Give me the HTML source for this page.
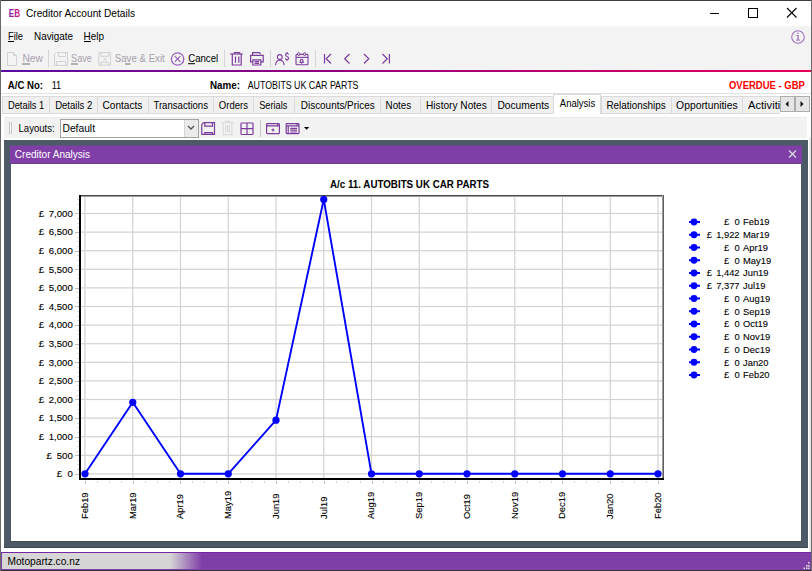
<!DOCTYPE html>
<html><head><meta charset="utf-8"><style>html,body{margin:0;padding:0;width:812px;height:571px;overflow:hidden;background:#fff}svg{display:block}</style></head>
<body><svg width="812" height="571" viewBox="0 0 812 571"><defs><linearGradient id="gl" x1="0" x2="1" y1="0" y2="0"><stop offset="0" stop-color="#5a0ca0"/><stop offset="0.5" stop-color="#a0007a"/><stop offset="1" stop-color="#e8005a"/></linearGradient><linearGradient id="eb" x1="0" x2="1"><stop offset="0" stop-color="#7a1fb0"/><stop offset="1" stop-color="#e0207a"/></linearGradient><linearGradient id="sb" x1="170" x2="202" y1="0" y2="0" gradientUnits="userSpaceOnUse"><stop offset="0" stop-color="#d6d6d6"/><stop offset="1" stop-color="#7f3fa7"/></linearGradient></defs><rect x="0" y="0" width="812" height="571" fill="#ffffff" /><rect x="1" y="26" width="810" height="44" fill="#f3f3f3" /><rect x="1" y="70" width="810" height="2" fill="url(#gl)" /><rect x="2" y="93" width="809" height="1" fill="#e1e1e1" /><rect x="4" y="117" width="803" height="21" fill="#f2f2f2" /><rect x="4" y="117" width="803" height="1" fill="#ebebeb" /><rect x="4" y="140" width="804" height="408" fill="#4b5a66" /><rect x="10" y="145" width="792" height="1" fill="#664c88" /><rect x="10" y="146" width="792" height="17" fill="#7f3fa7" /><rect x="10" y="163" width="792" height="1" fill="#6a3f8e" /><rect x="11" y="164" width="790" height="377" fill="#ffffff" /><rect x="10" y="541" width="792" height="1" fill="#434c54" /><rect x="4" y="547" width="804" height="1" fill="#3b4853" /><rect x="1" y="552" width="810" height="1" fill="#7526a6" /><rect x="1" y="553" width="810" height="16" fill="url(#sb)" /><rect x="1" y="569" width="810" height="1" fill="#7f3fa7" /><rect x="0" y="570" width="812" height="1" fill="#333333" /><rect x="1" y="552" width="1" height="18" fill="#7f3fa7" /><text x="7.4" y="564.6" font-size="11" font-weight="normal" fill="#000" text-anchor="start" font-family="Liberation Sans" textLength="72.6" lengthAdjust="spacingAndGlyphs" >Motopartz.co.nz</text><text x="8.8" y="16.6" font-size="10" font-weight="bold" fill="url(#eb)" text-anchor="start" font-family="Liberation Sans" textLength="11.4" lengthAdjust="spacingAndGlyphs" >EB</text><text x="26" y="17" font-size="11" font-weight="normal" fill="#000" text-anchor="start" font-family="Liberation Sans" textLength="109" lengthAdjust="spacingAndGlyphs" >Creditor Account Details</text><g stroke="#000" stroke-width="1" fill="none" shape-rendering="crispEdges"><line x1="710" y1="13.5" x2="719" y2="13.5"/><rect x="748.5" y="8.5" width="9" height="9"/></g><g stroke="#000" stroke-width="1.1" fill="none"><line x1="787" y1="8" x2="796.5" y2="17.5"/><line x1="796.5" y1="8" x2="787" y2="17.5"/></g><text x="8" y="40" font-size="11" font-weight="normal" fill="#000" text-anchor="start" font-family="Liberation Sans" textLength="15" lengthAdjust="spacingAndGlyphs" >File</text><text x="34" y="40" font-size="11" font-weight="normal" fill="#000" text-anchor="start" font-family="Liberation Sans" textLength="39" lengthAdjust="spacingAndGlyphs" >Navigate</text><text x="83.5" y="40" font-size="11" font-weight="normal" fill="#000" text-anchor="start" font-family="Liberation Sans" textLength="20.5" lengthAdjust="spacingAndGlyphs" >Help</text><rect x="8" y="41" width="6" height="1" fill="#000" /><rect x="84" y="41" width="7" height="1" fill="#000" /><circle cx="798" cy="37" r="6.3" fill="none" stroke="#a070c0" stroke-width="1.1"/><g fill="#a070c0"><rect x="797.4" y="35" width="1.3" height="5"/><rect x="796" y="39.6" width="4" height="1"/><rect x="796.5" y="35" width="1.5" height="0.9"/><circle cx="798" cy="33.2" r="0.8"/></g><path d="M7.5 52.5 H13.5 L16.5 55.5 V65.5 H7.5 Z M13.5 52.5 V55.5 H16.5" fill="none" stroke="#d2d2d2" stroke-width="1"/><text x="22.4" y="62.2" font-size="11" font-weight="normal" fill="#a8a0ae" text-anchor="start" font-family="Liberation Sans" textLength="20.4" lengthAdjust="spacingAndGlyphs" >New</text><rect x="22" y="63.5" width="8" height="1" fill="#707070" /><rect x="48" y="50" width="1" height="17" fill="#d5d5d5" /><path d="M56.5 52.5 H67.5 V65.5 H54.5 V54.5 Z" fill="none" stroke="#d2d2d2" stroke-width="1"/><path d="M58.5 52.5 V56.5 H65.5 V52.5 M56.5 65.5 V61.5 H65.5 V65.5" fill="none" stroke="#d2d2d2" stroke-width="1"/><text x="71.1" y="62.2" font-size="11" font-weight="normal" fill="#a8a0ae" text-anchor="start" font-family="Liberation Sans" textLength="20.7" lengthAdjust="spacingAndGlyphs" >Save</text><rect x="71" y="63.5" width="7" height="1" fill="#707070" /><path d="M98.8 52.6 H110.6 V65.2 H98.8 Z M100.8 52.6 V56.3 H108.8 V52.6 M100.8 65.2 V62.4 H108.8 V65.2 M103.3 57.6 L106.7 61 M106.7 57.6 L103.3 61" fill="none" stroke="#d2d2d2" stroke-width="1"/><text x="114.7" y="62.2" font-size="11" font-weight="normal" fill="#a8a0ae" text-anchor="start" font-family="Liberation Sans" textLength="50.1" lengthAdjust="spacingAndGlyphs" >Save &amp; Exit</text><rect x="125" y="63.5" width="5.5" height="1" fill="#707070" /><circle cx="177.6" cy="59" r="6.2" fill="none" stroke="#9a62bd" stroke-width="1.3"/><path d="M174.8 56.2 L180.4 61.8 M180.4 56.2 L174.8 61.8" stroke="#9a62bd" stroke-width="1.2"/><text x="188.2" y="62.2" font-size="11" font-weight="normal" fill="#000" text-anchor="start" font-family="Liberation Sans" textLength="30" lengthAdjust="spacingAndGlyphs" >Cancel</text><rect x="188" y="63.2" width="7" height="1" fill="#000" /><rect x="224" y="50" width="1" height="17" fill="#d5d5d5" /><g fill="none" stroke="#7b3c9e" stroke-width="1.2"><path d="M230.2 54 H242.8"/><path d="M234.5 53.8 V52.6 H239.6 V53.8"/><path d="M232.3 54 V65 H241.2 V54"/><path d="M235.5 56.5 V62.8 M238.8 56.5 V62.8"/></g><g fill="none" stroke="#7b3c9e" stroke-width="1.2"><path d="M252.6 55 V52.6 H259.4 L260.6 54"/><path d="M252.4 61.8 H250.6 V55.4 H263.2 V61.8 H261"/><path d="M252.8 59.8 H260.8 V65 H252.8 Z"/><path d="M254.6 61.6 H259 M254.6 63.4 H259"/></g><rect x="270" y="50" width="1" height="17" fill="#d5d5d5" /><g fill="none" stroke="#7b3c9e" stroke-width="1.1"><circle cx="279.8" cy="57" r="2.4"/><path d="M275.6 65.2 Q275.9 60.3 279.8 60 Q283.8 60.3 284.1 65.2"/><path d="M288.5 54.5 Q288.2 53.3 287 53.3 Q285.6 53.3 285.6 54.8 Q285.6 56 287 56.4 Q288.6 56.9 288.6 58.2 Q288.6 59.6 287 59.6 Q285.6 59.6 285.4 58.4"/><path d="M287 52.1 V53.3 M287 59.6 V60.8"/></g><g fill="none" stroke="#7b3c9e" stroke-width="1.1"><rect x="296" y="54.4" width="12" height="10.3" rx="1"/><path d="M296 57.4 H308"/></g><g fill="#f3f3f3" stroke="#7b3c9e" stroke-width="1"><rect x="297.8" y="52.6" width="1.8" height="3" rx="0.9"/><rect x="303.7" y="52.6" width="1.8" height="3" rx="0.9"/></g><g fill="none" stroke="#7b3c9e" stroke-width="1.1"><path d="M299.6 62.4 H303.8 M300.3 62.3 Q300.2 59.3 301.7 59.3 Q303.2 59.3 303.1 62.3 M301.7 62.6 V63.8"/></g><rect x="315" y="50" width="1" height="17" fill="#d5d5d5" /><g fill="none" stroke="#7b3c9e" stroke-width="1.2"><path d="M324.5 54 V63.5 M331 54 L326.2 58.8 L331 63.5"/><path d="M349.5 54 L344.7 58.8 L349.5 63.5"/><path d="M364 54 L368.8 58.8 L364 63.5"/><path d="M382.5 54 L387.3 58.8 L382.5 63.5 M389.4 54 V63.5"/></g><text x="7.8" y="89" font-size="11" font-weight="bold" fill="#000" text-anchor="start" font-family="Liberation Sans" textLength="35.2" lengthAdjust="spacingAndGlyphs" >A/C No:</text><text x="51.7" y="89" font-size="11" font-weight="normal" fill="#000" text-anchor="start" font-family="Liberation Sans" textLength="9.5" lengthAdjust="spacingAndGlyphs" >11</text><text x="210" y="89" font-size="11" font-weight="bold" fill="#000" text-anchor="start" font-family="Liberation Sans" textLength="30" lengthAdjust="spacingAndGlyphs" >Name:</text><text x="247.7" y="89" font-size="11" font-weight="normal" fill="#000" text-anchor="start" font-family="Liberation Sans" textLength="110.8" lengthAdjust="spacingAndGlyphs" >AUTOBITS UK CAR PARTS</text><text x="729" y="89" font-size="11" font-weight="bold" fill="#ff0000" text-anchor="start" font-family="Liberation Sans" textLength="75.8" lengthAdjust="spacingAndGlyphs" >OVERDUE - GBP</text><rect x="2" y="96" width="778" height="18" fill="#dadada" /><rect x="3" y="97" width="46" height="16" fill="#f0f0f0" /><rect x="50" y="97" width="47" height="16" fill="#f0f0f0" /><rect x="98" y="97" width="50" height="16" fill="#f0f0f0" /><rect x="149" y="97" width="64" height="16" fill="#f0f0f0" /><rect x="214" y="97" width="39" height="16" fill="#f0f0f0" /><rect x="254" y="97" width="40" height="16" fill="#f0f0f0" /><rect x="295" y="97" width="85" height="16" fill="#f0f0f0" /><rect x="381" y="97" width="39" height="16" fill="#f0f0f0" /><rect x="421" y="97" width="70" height="16" fill="#f0f0f0" /><rect x="492" y="97" width="61" height="16" fill="#f0f0f0" /><rect x="554" y="97" width="47" height="16" fill="#f0f0f0" /><rect x="602" y="97" width="69" height="16" fill="#f0f0f0" /><rect x="672" y="97" width="70" height="16" fill="#f0f0f0" /><rect x="743" y="97" width="38" height="16" fill="#f0f0f0" /><rect x="553" y="94" width="48" height="20" fill="#dadada" /><rect x="554" y="95" width="46" height="20" fill="#ffffff" /><clipPath id="tc"><rect x="0" y="90" width="780" height="30"/></clipPath><g clip-path="url(#tc)"><text x="7.9" y="108.8" font-size="11" font-weight="normal" fill="#000" text-anchor="start" font-family="Liberation Sans" textLength="36.4" lengthAdjust="spacingAndGlyphs" >Details 1</text><text x="55.2" y="108.8" font-size="11" font-weight="normal" fill="#000" text-anchor="start" font-family="Liberation Sans" textLength="37" lengthAdjust="spacingAndGlyphs" >Details 2</text><text x="102.5" y="108.8" font-size="11" font-weight="normal" fill="#000" text-anchor="start" font-family="Liberation Sans" textLength="39.8" lengthAdjust="spacingAndGlyphs" >Contacts</text><text x="153.4" y="108.8" font-size="11" font-weight="normal" fill="#000" text-anchor="start" font-family="Liberation Sans" textLength="54.6" lengthAdjust="spacingAndGlyphs" >Transactions</text><text x="218.8" y="108.8" font-size="11" font-weight="normal" fill="#000" text-anchor="start" font-family="Liberation Sans" textLength="29.2" lengthAdjust="spacingAndGlyphs" >Orders</text><text x="259.2" y="108.8" font-size="11" font-weight="normal" fill="#000" text-anchor="start" font-family="Liberation Sans" textLength="28.2" lengthAdjust="spacingAndGlyphs" >Serials</text><text x="300.8" y="108.8" font-size="11" font-weight="normal" fill="#000" text-anchor="start" font-family="Liberation Sans" textLength="73.9" lengthAdjust="spacingAndGlyphs" >Discounts/Prices</text><text x="385.6" y="108.8" font-size="11" font-weight="normal" fill="#000" text-anchor="start" font-family="Liberation Sans" textLength="25.6" lengthAdjust="spacingAndGlyphs" >Notes</text><text x="426" y="108.8" font-size="11" font-weight="normal" fill="#000" text-anchor="start" font-family="Liberation Sans" textLength="60.8" lengthAdjust="spacingAndGlyphs" >History Notes</text><text x="497.4" y="108.8" font-size="11" font-weight="normal" fill="#000" text-anchor="start" font-family="Liberation Sans" textLength="51.8" lengthAdjust="spacingAndGlyphs" >Documents</text><text x="559.8" y="106.6" font-size="11" font-weight="normal" fill="#000" text-anchor="start" font-family="Liberation Sans" textLength="35.4" lengthAdjust="spacingAndGlyphs" >Analysis</text><text x="606.4" y="108.8" font-size="11" font-weight="normal" fill="#000" text-anchor="start" font-family="Liberation Sans" textLength="59.3" lengthAdjust="spacingAndGlyphs" >Relationships</text><text x="676.1" y="108.8" font-size="11" font-weight="normal" fill="#000" text-anchor="start" font-family="Liberation Sans" textLength="61.5" lengthAdjust="spacingAndGlyphs" >Opportunities</text><text x="748" y="108.8" font-size="11" font-weight="normal" fill="#000" text-anchor="start" font-family="Liberation Sans" textLength="44" lengthAdjust="spacingAndGlyphs" >Activities</text></g><rect x="780" y="96" width="15" height="16" fill="#adadad" /><rect x="781" y="97" width="13" height="14" fill="#e5e5e5" /><rect x="795" y="96" width="15" height="16" fill="#adadad" /><rect x="796" y="97" width="13" height="14" fill="#e5e5e5" /><path d="M785.5 104 L788.5 101 V107 Z" fill="#000"/><path d="M803.5 104 L800.5 101 V107 Z" fill="#000"/><rect x="9" y="122" width="1" height="12" fill="#c8c8c8" /><rect x="11" y="122" width="1" height="12" fill="#c8c8c8" /><text x="18.5" y="132" font-size="11" font-weight="normal" fill="#000" text-anchor="start" font-family="Liberation Sans" textLength="36.2" lengthAdjust="spacingAndGlyphs" >Layouts:</text><rect x="60" y="119" width="139" height="19" fill="#a2a2a2" /><rect x="61" y="120" width="137" height="17" fill="#ffffff" /><rect x="184" y="120" width="14" height="17" fill="#ebebeb" /><rect x="184" y="120" width="1" height="17" fill="#d4d4d4" /><path d="M188 126 L191 129 L194 126" fill="none" stroke="#505050" stroke-width="1.3"/><text x="62.5" y="132" font-size="11" font-weight="normal" fill="#000" text-anchor="start" font-family="Liberation Sans" textLength="32.5" lengthAdjust="spacingAndGlyphs" >Default</text><g fill="none" stroke="#7b3c9e" stroke-width="1.2"><path d="M203.6 122.6 H214.5 V134.4 H201.8 V124.4 Z"/><path d="M204.8 122.6 V126.2 H212.5 V122.6 M204.8 134.4 V132.6 H212.5 V134.4"/></g><g fill="none" stroke="#dcdcdc" stroke-width="1.2"><path d="M221.5 122.6 H233.6"/><path d="M225.5 122.3 V121.3 H229.6 V122.3"/><path d="M223.3 122.6 V134.6 H231.8 V122.6"/><path d="M225.8 125 V132.2 M227.6 125 V132.2 M229.4 125 V132.2"/></g><g fill="none" stroke="#7b3c9e" stroke-width="1.2"><rect x="241" y="123" width="12" height="11.5" rx="0.8"/><path d="M247 123 V134.5 M241 128.7 H253"/></g><rect x="260" y="120" width="1" height="17" fill="#c8c8c8" /><g fill="none" stroke="#7b3c9e" stroke-width="1.2"><rect x="266.6" y="123.6" width="12.8" height="10" rx="0.8"/><path d="M266.6 125.8 H279.4 M277.6 123.6 V125.8"/><path d="M273 128.5 V131.5 M271.5 130 H274.5"/><rect x="286.2" y="123.6" width="12.8" height="10" rx="0.8"/><path d="M286.2 125.8 H299 M297.2 123.6 V125.8 M288.2 125.8 V133.6 M290.3 128.3 H297 M290.3 130.2 H297 M290.3 132 H297"/></g><path d="M304 127 H309.2 L306.6 129.8 Z" fill="#000"/><text x="14.8" y="158.3" font-size="11" font-weight="normal" fill="#ffffff" text-anchor="start" font-family="Liberation Sans" textLength="75.3" lengthAdjust="spacingAndGlyphs" >Creditor Analysis</text><path d="M789 150.5 L796 157.5 M796 150.5 L789 157.5" stroke="#dcdcdc" stroke-width="1.3"/><text x="330" y="188" font-size="10" font-weight="bold" fill="#000" text-anchor="start" font-family="Liberation Sans" textLength="159" lengthAdjust="spacingAndGlyphs" >A/c 11. AUTOBITS UK CAR PARTS</text><rect x="81" y="473.30" width="581" height="1.2" fill="#d2d2d2"/><rect x="81" y="454.70" width="581" height="1.2" fill="#d2d2d2"/><rect x="81" y="436.10" width="581" height="1.2" fill="#d2d2d2"/><rect x="81" y="417.50" width="581" height="1.2" fill="#d2d2d2"/><rect x="81" y="398.90" width="581" height="1.2" fill="#d2d2d2"/><rect x="81" y="380.30" width="581" height="1.2" fill="#d2d2d2"/><rect x="81" y="361.70" width="581" height="1.2" fill="#d2d2d2"/><rect x="81" y="343.10" width="581" height="1.2" fill="#d2d2d2"/><rect x="81" y="324.50" width="581" height="1.2" fill="#d2d2d2"/><rect x="81" y="305.90" width="581" height="1.2" fill="#d2d2d2"/><rect x="81" y="287.30" width="581" height="1.2" fill="#d2d2d2"/><rect x="81" y="268.70" width="581" height="1.2" fill="#d2d2d2"/><rect x="81" y="250.10" width="581" height="1.2" fill="#d2d2d2"/><rect x="81" y="231.50" width="581" height="1.2" fill="#d2d2d2"/><rect x="81" y="212.90" width="581" height="1.2" fill="#d2d2d2"/><rect x="84.40" y="197" width="1.2" height="281" fill="#d2d2d2"/><rect x="132.15" y="197" width="1.2" height="281" fill="#d2d2d2"/><rect x="179.90" y="197" width="1.2" height="281" fill="#d2d2d2"/><rect x="227.65" y="197" width="1.2" height="281" fill="#d2d2d2"/><rect x="275.40" y="197" width="1.2" height="281" fill="#d2d2d2"/><rect x="323.15" y="197" width="1.2" height="281" fill="#d2d2d2"/><rect x="370.90" y="197" width="1.2" height="281" fill="#d2d2d2"/><rect x="418.65" y="197" width="1.2" height="281" fill="#d2d2d2"/><rect x="466.40" y="197" width="1.2" height="281" fill="#d2d2d2"/><rect x="514.15" y="197" width="1.2" height="281" fill="#d2d2d2"/><rect x="561.90" y="197" width="1.2" height="281" fill="#d2d2d2"/><rect x="609.65" y="197" width="1.2" height="281" fill="#d2d2d2"/><rect x="657.40" y="197" width="1.2" height="281" fill="#d2d2d2"/><g shape-rendering="crispEdges"><rect x="75" y="474" width="4" height="1" fill="#bdbdbd" /><rect x="77" y="469" width="2" height="1" fill="#dadada" /><rect x="77" y="464" width="2" height="1" fill="#dadada" /><rect x="77" y="460" width="2" height="1" fill="#dadada" /><rect x="75" y="455" width="4" height="1" fill="#bdbdbd" /><rect x="77" y="451" width="2" height="1" fill="#dadada" /><rect x="77" y="446" width="2" height="1" fill="#dadada" /><rect x="77" y="441" width="2" height="1" fill="#dadada" /><rect x="75" y="437" width="4" height="1" fill="#bdbdbd" /><rect x="77" y="432" width="2" height="1" fill="#dadada" /><rect x="77" y="427" width="2" height="1" fill="#dadada" /><rect x="77" y="423" width="2" height="1" fill="#dadada" /><rect x="75" y="418" width="4" height="1" fill="#bdbdbd" /><rect x="77" y="413" width="2" height="1" fill="#dadada" /><rect x="77" y="409" width="2" height="1" fill="#dadada" /><rect x="77" y="404" width="2" height="1" fill="#dadada" /><rect x="75" y="399" width="4" height="1" fill="#bdbdbd" /><rect x="77" y="395" width="2" height="1" fill="#dadada" /><rect x="77" y="390" width="2" height="1" fill="#dadada" /><rect x="77" y="385" width="2" height="1" fill="#dadada" /><rect x="75" y="381" width="4" height="1" fill="#bdbdbd" /><rect x="77" y="376" width="2" height="1" fill="#dadada" /><rect x="77" y="372" width="2" height="1" fill="#dadada" /><rect x="77" y="367" width="2" height="1" fill="#dadada" /><rect x="75" y="362" width="4" height="1" fill="#bdbdbd" /><rect x="77" y="358" width="2" height="1" fill="#dadada" /><rect x="77" y="353" width="2" height="1" fill="#dadada" /><rect x="77" y="348" width="2" height="1" fill="#dadada" /><rect x="75" y="344" width="4" height="1" fill="#bdbdbd" /><rect x="77" y="339" width="2" height="1" fill="#dadada" /><rect x="77" y="334" width="2" height="1" fill="#dadada" /><rect x="77" y="330" width="2" height="1" fill="#dadada" /><rect x="75" y="325" width="4" height="1" fill="#bdbdbd" /><rect x="77" y="320" width="2" height="1" fill="#dadada" /><rect x="77" y="316" width="2" height="1" fill="#dadada" /><rect x="77" y="311" width="2" height="1" fill="#dadada" /><rect x="75" y="306" width="4" height="1" fill="#bdbdbd" /><rect x="77" y="302" width="2" height="1" fill="#dadada" /><rect x="77" y="297" width="2" height="1" fill="#dadada" /><rect x="77" y="292" width="2" height="1" fill="#dadada" /><rect x="75" y="288" width="4" height="1" fill="#bdbdbd" /><rect x="77" y="283" width="2" height="1" fill="#dadada" /><rect x="77" y="278" width="2" height="1" fill="#dadada" /><rect x="77" y="274" width="2" height="1" fill="#dadada" /><rect x="75" y="269" width="4" height="1" fill="#bdbdbd" /><rect x="77" y="265" width="2" height="1" fill="#dadada" /><rect x="77" y="260" width="2" height="1" fill="#dadada" /><rect x="77" y="255" width="2" height="1" fill="#dadada" /><rect x="75" y="251" width="4" height="1" fill="#bdbdbd" /><rect x="77" y="246" width="2" height="1" fill="#dadada" /><rect x="77" y="241" width="2" height="1" fill="#dadada" /><rect x="77" y="237" width="2" height="1" fill="#dadada" /><rect x="75" y="232" width="4" height="1" fill="#bdbdbd" /><rect x="77" y="227" width="2" height="1" fill="#dadada" /><rect x="77" y="223" width="2" height="1" fill="#dadada" /><rect x="77" y="218" width="2" height="1" fill="#dadada" /><rect x="75" y="213" width="4" height="1" fill="#bdbdbd" /><rect x="77" y="209" width="2" height="1" fill="#dadada" /><rect x="77" y="204" width="2" height="1" fill="#dadada" /><rect x="77" y="199" width="2" height="1" fill="#dadada" /><rect x="85" y="481" width="1" height="3" fill="#bdbdbd" /><rect x="97" y="481" width="1" height="2" fill="#dadada" /><rect x="109" y="481" width="1" height="2" fill="#dadada" /><rect x="121" y="481" width="1" height="2" fill="#dadada" /><rect x="133" y="481" width="1" height="3" fill="#bdbdbd" /><rect x="145" y="481" width="1" height="2" fill="#dadada" /><rect x="157" y="481" width="1" height="2" fill="#dadada" /><rect x="169" y="481" width="1" height="2" fill="#dadada" /><rect x="180" y="481" width="1" height="3" fill="#bdbdbd" /><rect x="192" y="481" width="1" height="2" fill="#dadada" /><rect x="204" y="481" width="1" height="2" fill="#dadada" /><rect x="216" y="481" width="1" height="2" fill="#dadada" /><rect x="228" y="481" width="1" height="3" fill="#bdbdbd" /><rect x="240" y="481" width="1" height="2" fill="#dadada" /><rect x="252" y="481" width="1" height="2" fill="#dadada" /><rect x="264" y="481" width="1" height="2" fill="#dadada" /><rect x="276" y="481" width="1" height="3" fill="#bdbdbd" /><rect x="288" y="481" width="1" height="2" fill="#dadada" /><rect x="300" y="481" width="1" height="2" fill="#dadada" /><rect x="312" y="481" width="1" height="2" fill="#dadada" /><rect x="324" y="481" width="1" height="3" fill="#bdbdbd" /><rect x="336" y="481" width="1" height="2" fill="#dadada" /><rect x="348" y="481" width="1" height="2" fill="#dadada" /><rect x="360" y="481" width="1" height="2" fill="#dadada" /><rect x="372" y="481" width="1" height="3" fill="#bdbdbd" /><rect x="383" y="481" width="1" height="2" fill="#dadada" /><rect x="395" y="481" width="1" height="2" fill="#dadada" /><rect x="407" y="481" width="1" height="2" fill="#dadada" /><rect x="419" y="481" width="1" height="3" fill="#bdbdbd" /><rect x="431" y="481" width="1" height="2" fill="#dadada" /><rect x="443" y="481" width="1" height="2" fill="#dadada" /><rect x="455" y="481" width="1" height="2" fill="#dadada" /><rect x="467" y="481" width="1" height="3" fill="#bdbdbd" /><rect x="479" y="481" width="1" height="2" fill="#dadada" /><rect x="491" y="481" width="1" height="2" fill="#dadada" /><rect x="503" y="481" width="1" height="2" fill="#dadada" /><rect x="515" y="481" width="1" height="3" fill="#bdbdbd" /><rect x="527" y="481" width="1" height="2" fill="#dadada" /><rect x="539" y="481" width="1" height="2" fill="#dadada" /><rect x="551" y="481" width="1" height="2" fill="#dadada" /><rect x="562" y="481" width="1" height="3" fill="#bdbdbd" /><rect x="574" y="481" width="1" height="2" fill="#dadada" /><rect x="586" y="481" width="1" height="2" fill="#dadada" /><rect x="598" y="481" width="1" height="2" fill="#dadada" /><rect x="610" y="481" width="1" height="3" fill="#bdbdbd" /><rect x="622" y="481" width="1" height="2" fill="#dadada" /><rect x="634" y="481" width="1" height="2" fill="#dadada" /><rect x="646" y="481" width="1" height="2" fill="#dadada" /><rect x="658" y="481" width="1" height="3" fill="#bdbdbd" /><rect x="79" y="195" width="585" height="1" fill="#4a4a4a" /><rect x="81" y="196" width="581" height="1" fill="#a0a0a0" /><rect x="662" y="195" width="1" height="285" fill="#9a9a9a" /><rect x="663" y="195" width="1" height="285" fill="#606060" /><rect x="79" y="195" width="2" height="285" fill="#000000" /><rect x="79" y="478" width="585" height="2" fill="#000000" /></g><text x="72.8" y="477.2" font-size="9.6" font-weight="normal" fill="#000" text-anchor="end" font-family="Liberation Sans" stroke="#000" stroke-width="0.12">0</text><text x="62.1" y="477.2" font-size="9.6" font-weight="normal" fill="#000" text-anchor="end" font-family="Liberation Sans" stroke="#000" stroke-width="0.12">£</text><text x="72.8" y="458.59999999999997" font-size="9.6" font-weight="normal" fill="#000" text-anchor="end" font-family="Liberation Sans" stroke="#000" stroke-width="0.12">500</text><text x="51.9" y="458.59999999999997" font-size="9.6" font-weight="normal" fill="#000" text-anchor="end" font-family="Liberation Sans" stroke="#000" stroke-width="0.12">£</text><text x="72.8" y="440.0" font-size="9.6" font-weight="normal" fill="#000" text-anchor="end" font-family="Liberation Sans" stroke="#000" stroke-width="0.12">1,000</text><text x="44.199999999999996" y="440.0" font-size="9.6" font-weight="normal" fill="#000" text-anchor="end" font-family="Liberation Sans" stroke="#000" stroke-width="0.12">£</text><text x="72.8" y="421.4" font-size="9.6" font-weight="normal" fill="#000" text-anchor="end" font-family="Liberation Sans" stroke="#000" stroke-width="0.12">1,500</text><text x="44.199999999999996" y="421.4" font-size="9.6" font-weight="normal" fill="#000" text-anchor="end" font-family="Liberation Sans" stroke="#000" stroke-width="0.12">£</text><text x="72.8" y="402.8" font-size="9.6" font-weight="normal" fill="#000" text-anchor="end" font-family="Liberation Sans" stroke="#000" stroke-width="0.12">2,000</text><text x="44.199999999999996" y="402.8" font-size="9.6" font-weight="normal" fill="#000" text-anchor="end" font-family="Liberation Sans" stroke="#000" stroke-width="0.12">£</text><text x="72.8" y="384.2" font-size="9.6" font-weight="normal" fill="#000" text-anchor="end" font-family="Liberation Sans" stroke="#000" stroke-width="0.12">2,500</text><text x="44.199999999999996" y="384.2" font-size="9.6" font-weight="normal" fill="#000" text-anchor="end" font-family="Liberation Sans" stroke="#000" stroke-width="0.12">£</text><text x="72.8" y="365.6" font-size="9.6" font-weight="normal" fill="#000" text-anchor="end" font-family="Liberation Sans" stroke="#000" stroke-width="0.12">3,000</text><text x="44.199999999999996" y="365.6" font-size="9.6" font-weight="normal" fill="#000" text-anchor="end" font-family="Liberation Sans" stroke="#000" stroke-width="0.12">£</text><text x="72.8" y="347.0" font-size="9.6" font-weight="normal" fill="#000" text-anchor="end" font-family="Liberation Sans" stroke="#000" stroke-width="0.12">3,500</text><text x="44.199999999999996" y="347.0" font-size="9.6" font-weight="normal" fill="#000" text-anchor="end" font-family="Liberation Sans" stroke="#000" stroke-width="0.12">£</text><text x="72.8" y="328.4" font-size="9.6" font-weight="normal" fill="#000" text-anchor="end" font-family="Liberation Sans" stroke="#000" stroke-width="0.12">4,000</text><text x="44.199999999999996" y="328.4" font-size="9.6" font-weight="normal" fill="#000" text-anchor="end" font-family="Liberation Sans" stroke="#000" stroke-width="0.12">£</text><text x="72.8" y="309.8" font-size="9.6" font-weight="normal" fill="#000" text-anchor="end" font-family="Liberation Sans" stroke="#000" stroke-width="0.12">4,500</text><text x="44.199999999999996" y="309.8" font-size="9.6" font-weight="normal" fill="#000" text-anchor="end" font-family="Liberation Sans" stroke="#000" stroke-width="0.12">£</text><text x="72.8" y="291.20000000000005" font-size="9.6" font-weight="normal" fill="#000" text-anchor="end" font-family="Liberation Sans" stroke="#000" stroke-width="0.12">5,000</text><text x="44.199999999999996" y="291.20000000000005" font-size="9.6" font-weight="normal" fill="#000" text-anchor="end" font-family="Liberation Sans" stroke="#000" stroke-width="0.12">£</text><text x="72.8" y="272.6" font-size="9.6" font-weight="normal" fill="#000" text-anchor="end" font-family="Liberation Sans" stroke="#000" stroke-width="0.12">5,500</text><text x="44.199999999999996" y="272.6" font-size="9.6" font-weight="normal" fill="#000" text-anchor="end" font-family="Liberation Sans" stroke="#000" stroke-width="0.12">£</text><text x="72.8" y="254.00000000000003" font-size="9.6" font-weight="normal" fill="#000" text-anchor="end" font-family="Liberation Sans" stroke="#000" stroke-width="0.12">6,000</text><text x="44.199999999999996" y="254.00000000000003" font-size="9.6" font-weight="normal" fill="#000" text-anchor="end" font-family="Liberation Sans" stroke="#000" stroke-width="0.12">£</text><text x="72.8" y="235.40000000000003" font-size="9.6" font-weight="normal" fill="#000" text-anchor="end" font-family="Liberation Sans" stroke="#000" stroke-width="0.12">6,500</text><text x="44.199999999999996" y="235.40000000000003" font-size="9.6" font-weight="normal" fill="#000" text-anchor="end" font-family="Liberation Sans" stroke="#000" stroke-width="0.12">£</text><text x="72.8" y="216.80000000000004" font-size="9.6" font-weight="normal" fill="#000" text-anchor="end" font-family="Liberation Sans" stroke="#000" stroke-width="0.12">7,000</text><text x="44.199999999999996" y="216.80000000000004" font-size="9.6" font-weight="normal" fill="#000" text-anchor="end" font-family="Liberation Sans" stroke="#000" stroke-width="0.12">£</text><text transform="translate(87.8,519) rotate(-90)" font-size="9.4" font-family="Liberation Sans" stroke="#000" stroke-width="0.12">Feb19</text><text transform="translate(135.55,519) rotate(-90)" font-size="9.4" font-family="Liberation Sans" stroke="#000" stroke-width="0.12">Mar19</text><text transform="translate(183.3,519) rotate(-90)" font-size="9.4" font-family="Liberation Sans" stroke="#000" stroke-width="0.12">Apr19</text><text transform="translate(231.05,519) rotate(-90)" font-size="9.4" font-family="Liberation Sans" stroke="#000" stroke-width="0.12">May19</text><text transform="translate(278.8,519) rotate(-90)" font-size="9.4" font-family="Liberation Sans" stroke="#000" stroke-width="0.12">Jun19</text><text transform="translate(326.55,519) rotate(-90)" font-size="9.4" font-family="Liberation Sans" stroke="#000" stroke-width="0.12">Jul19</text><text transform="translate(374.3,519) rotate(-90)" font-size="9.4" font-family="Liberation Sans" stroke="#000" stroke-width="0.12">Aug19</text><text transform="translate(422.05,519) rotate(-90)" font-size="9.4" font-family="Liberation Sans" stroke="#000" stroke-width="0.12">Sep19</text><text transform="translate(469.8,519) rotate(-90)" font-size="9.4" font-family="Liberation Sans" stroke="#000" stroke-width="0.12">Oct19</text><text transform="translate(517.55,519) rotate(-90)" font-size="9.4" font-family="Liberation Sans" stroke="#000" stroke-width="0.12">Nov19</text><text transform="translate(565.3,519) rotate(-90)" font-size="9.4" font-family="Liberation Sans" stroke="#000" stroke-width="0.12">Dec19</text><text transform="translate(613.05,519) rotate(-90)" font-size="9.4" font-family="Liberation Sans" stroke="#000" stroke-width="0.12">Jan20</text><text transform="translate(660.8,519) rotate(-90)" font-size="9.4" font-family="Liberation Sans" stroke="#000" stroke-width="0.12">Feb20</text><polyline points="85.00,473.80 132.75,402.30 180.50,473.80 228.25,473.80 276.00,420.16 323.75,199.38 371.50,473.80 419.25,473.80 467.00,473.80 514.75,473.80 562.50,473.80 610.25,473.80 658.00,473.80" fill="none" stroke="#0000ff" stroke-width="1.9" stroke-linejoin="round"/><circle cx="85.00" cy="473.80" r="3.6" fill="#0000ff"/><circle cx="132.75" cy="402.30" r="3.6" fill="#0000ff"/><circle cx="180.50" cy="473.80" r="3.6" fill="#0000ff"/><circle cx="228.25" cy="473.80" r="3.6" fill="#0000ff"/><circle cx="276.00" cy="420.16" r="3.6" fill="#0000ff"/><circle cx="323.75" cy="199.38" r="3.6" fill="#0000ff"/><circle cx="371.50" cy="473.80" r="3.6" fill="#0000ff"/><circle cx="419.25" cy="473.80" r="3.6" fill="#0000ff"/><circle cx="467.00" cy="473.80" r="3.6" fill="#0000ff"/><circle cx="514.75" cy="473.80" r="3.6" fill="#0000ff"/><circle cx="562.50" cy="473.80" r="3.6" fill="#0000ff"/><circle cx="610.25" cy="473.80" r="3.6" fill="#0000ff"/><circle cx="658.00" cy="473.80" r="3.6" fill="#0000ff"/><rect x="689" y="221.00" width="11" height="2" fill="#0000ff"/><circle cx="694" cy="222.00" r="3.4" fill="#0000ff"/><text x="743.0" y="225.4" font-size="9.4" font-weight="normal" fill="#000" text-anchor="start" font-family="Liberation Sans" stroke="#000" stroke-width="0.1">Feb19</text><text x="739.6" y="225.4" font-size="9.4" font-weight="normal" fill="#000" text-anchor="end" font-family="Liberation Sans" stroke="#000" stroke-width="0.1">0</text><text x="729.2" y="225.4" font-size="9.4" font-weight="normal" fill="#000" text-anchor="end" font-family="Liberation Sans" stroke="#000" stroke-width="0.1">£</text><rect x="689" y="233.75" width="11" height="2" fill="#0000ff"/><circle cx="694" cy="234.75" r="3.4" fill="#0000ff"/><text x="743.0" y="238.15" font-size="9.4" font-weight="normal" fill="#000" text-anchor="start" font-family="Liberation Sans" stroke="#000" stroke-width="0.1">Mar19</text><text x="739.6" y="238.15" font-size="9.4" font-weight="normal" fill="#000" text-anchor="end" font-family="Liberation Sans" stroke="#000" stroke-width="0.1">1,922</text><text x="711.9000000000001" y="238.15" font-size="9.4" font-weight="normal" fill="#000" text-anchor="end" font-family="Liberation Sans" stroke="#000" stroke-width="0.1">£</text><rect x="689" y="246.50" width="11" height="2" fill="#0000ff"/><circle cx="694" cy="247.50" r="3.4" fill="#0000ff"/><text x="743.0" y="250.9" font-size="9.4" font-weight="normal" fill="#000" text-anchor="start" font-family="Liberation Sans" stroke="#000" stroke-width="0.1">Apr19</text><text x="739.6" y="250.9" font-size="9.4" font-weight="normal" fill="#000" text-anchor="end" font-family="Liberation Sans" stroke="#000" stroke-width="0.1">0</text><text x="729.2" y="250.9" font-size="9.4" font-weight="normal" fill="#000" text-anchor="end" font-family="Liberation Sans" stroke="#000" stroke-width="0.1">£</text><rect x="689" y="259.25" width="11" height="2" fill="#0000ff"/><circle cx="694" cy="260.25" r="3.4" fill="#0000ff"/><text x="743.0" y="263.65" font-size="9.4" font-weight="normal" fill="#000" text-anchor="start" font-family="Liberation Sans" stroke="#000" stroke-width="0.1">May19</text><text x="739.6" y="263.65" font-size="9.4" font-weight="normal" fill="#000" text-anchor="end" font-family="Liberation Sans" stroke="#000" stroke-width="0.1">0</text><text x="729.2" y="263.65" font-size="9.4" font-weight="normal" fill="#000" text-anchor="end" font-family="Liberation Sans" stroke="#000" stroke-width="0.1">£</text><rect x="689" y="272.00" width="11" height="2" fill="#0000ff"/><circle cx="694" cy="273.00" r="3.4" fill="#0000ff"/><text x="743.0" y="276.4" font-size="9.4" font-weight="normal" fill="#000" text-anchor="start" font-family="Liberation Sans" stroke="#000" stroke-width="0.1">Jun19</text><text x="739.6" y="276.4" font-size="9.4" font-weight="normal" fill="#000" text-anchor="end" font-family="Liberation Sans" stroke="#000" stroke-width="0.1">1,442</text><text x="711.9000000000001" y="276.4" font-size="9.4" font-weight="normal" fill="#000" text-anchor="end" font-family="Liberation Sans" stroke="#000" stroke-width="0.1">£</text><rect x="689" y="284.75" width="11" height="2" fill="#0000ff"/><circle cx="694" cy="285.75" r="3.4" fill="#0000ff"/><text x="743.0" y="289.15" font-size="9.4" font-weight="normal" fill="#000" text-anchor="start" font-family="Liberation Sans" stroke="#000" stroke-width="0.1">Jul19</text><text x="739.6" y="289.15" font-size="9.4" font-weight="normal" fill="#000" text-anchor="end" font-family="Liberation Sans" stroke="#000" stroke-width="0.1">7,377</text><text x="711.9000000000001" y="289.15" font-size="9.4" font-weight="normal" fill="#000" text-anchor="end" font-family="Liberation Sans" stroke="#000" stroke-width="0.1">£</text><rect x="689" y="297.50" width="11" height="2" fill="#0000ff"/><circle cx="694" cy="298.50" r="3.4" fill="#0000ff"/><text x="743.0" y="301.9" font-size="9.4" font-weight="normal" fill="#000" text-anchor="start" font-family="Liberation Sans" stroke="#000" stroke-width="0.1">Aug19</text><text x="739.6" y="301.9" font-size="9.4" font-weight="normal" fill="#000" text-anchor="end" font-family="Liberation Sans" stroke="#000" stroke-width="0.1">0</text><text x="729.2" y="301.9" font-size="9.4" font-weight="normal" fill="#000" text-anchor="end" font-family="Liberation Sans" stroke="#000" stroke-width="0.1">£</text><rect x="689" y="310.25" width="11" height="2" fill="#0000ff"/><circle cx="694" cy="311.25" r="3.4" fill="#0000ff"/><text x="743.0" y="314.65" font-size="9.4" font-weight="normal" fill="#000" text-anchor="start" font-family="Liberation Sans" stroke="#000" stroke-width="0.1">Sep19</text><text x="739.6" y="314.65" font-size="9.4" font-weight="normal" fill="#000" text-anchor="end" font-family="Liberation Sans" stroke="#000" stroke-width="0.1">0</text><text x="729.2" y="314.65" font-size="9.4" font-weight="normal" fill="#000" text-anchor="end" font-family="Liberation Sans" stroke="#000" stroke-width="0.1">£</text><rect x="689" y="323.00" width="11" height="2" fill="#0000ff"/><circle cx="694" cy="324.00" r="3.4" fill="#0000ff"/><text x="743.0" y="327.4" font-size="9.4" font-weight="normal" fill="#000" text-anchor="start" font-family="Liberation Sans" stroke="#000" stroke-width="0.1">Oct19</text><text x="739.6" y="327.4" font-size="9.4" font-weight="normal" fill="#000" text-anchor="end" font-family="Liberation Sans" stroke="#000" stroke-width="0.1">0</text><text x="729.2" y="327.4" font-size="9.4" font-weight="normal" fill="#000" text-anchor="end" font-family="Liberation Sans" stroke="#000" stroke-width="0.1">£</text><rect x="689" y="335.75" width="11" height="2" fill="#0000ff"/><circle cx="694" cy="336.75" r="3.4" fill="#0000ff"/><text x="743.0" y="340.15" font-size="9.4" font-weight="normal" fill="#000" text-anchor="start" font-family="Liberation Sans" stroke="#000" stroke-width="0.1">Nov19</text><text x="739.6" y="340.15" font-size="9.4" font-weight="normal" fill="#000" text-anchor="end" font-family="Liberation Sans" stroke="#000" stroke-width="0.1">0</text><text x="729.2" y="340.15" font-size="9.4" font-weight="normal" fill="#000" text-anchor="end" font-family="Liberation Sans" stroke="#000" stroke-width="0.1">£</text><rect x="689" y="348.50" width="11" height="2" fill="#0000ff"/><circle cx="694" cy="349.50" r="3.4" fill="#0000ff"/><text x="743.0" y="352.9" font-size="9.4" font-weight="normal" fill="#000" text-anchor="start" font-family="Liberation Sans" stroke="#000" stroke-width="0.1">Dec19</text><text x="739.6" y="352.9" font-size="9.4" font-weight="normal" fill="#000" text-anchor="end" font-family="Liberation Sans" stroke="#000" stroke-width="0.1">0</text><text x="729.2" y="352.9" font-size="9.4" font-weight="normal" fill="#000" text-anchor="end" font-family="Liberation Sans" stroke="#000" stroke-width="0.1">£</text><rect x="689" y="361.25" width="11" height="2" fill="#0000ff"/><circle cx="694" cy="362.25" r="3.4" fill="#0000ff"/><text x="743.0" y="365.65" font-size="9.4" font-weight="normal" fill="#000" text-anchor="start" font-family="Liberation Sans" stroke="#000" stroke-width="0.1">Jan20</text><text x="739.6" y="365.65" font-size="9.4" font-weight="normal" fill="#000" text-anchor="end" font-family="Liberation Sans" stroke="#000" stroke-width="0.1">0</text><text x="729.2" y="365.65" font-size="9.4" font-weight="normal" fill="#000" text-anchor="end" font-family="Liberation Sans" stroke="#000" stroke-width="0.1">£</text><rect x="689" y="374.00" width="11" height="2" fill="#0000ff"/><circle cx="694" cy="375.00" r="3.4" fill="#0000ff"/><text x="743.0" y="378.4" font-size="9.4" font-weight="normal" fill="#000" text-anchor="start" font-family="Liberation Sans" stroke="#000" stroke-width="0.1">Feb20</text><text x="739.6" y="378.4" font-size="9.4" font-weight="normal" fill="#000" text-anchor="end" font-family="Liberation Sans" stroke="#000" stroke-width="0.1">0</text><text x="729.2" y="378.4" font-size="9.4" font-weight="normal" fill="#000" text-anchor="end" font-family="Liberation Sans" stroke="#000" stroke-width="0.1">£</text><rect x="808" y="562" width="1.6" height="1.6" fill="#d8d8d8" /><rect x="806" y="565" width="1.6" height="1.6" fill="#d8d8d8" /><rect x="808" y="565" width="1.6" height="1.6" fill="#d8d8d8" /><rect x="803.5" y="567.5" width="1.6" height="1.6" fill="#d8d8d8" /><rect x="806" y="567.5" width="1.6" height="1.6" fill="#d8d8d8" /><rect x="808" y="567.5" width="1.6" height="1.6" fill="#d8d8d8" /><rect x="0" y="0" width="812" height="1" fill="#3c3c3c" /><rect x="0" y="0" width="1" height="571" fill="#6a6a6a" /><rect x="811" y="0" width="1" height="571" fill="#6a6a6a" /><rect x="809" y="137" width="2" height="415" fill="#e8e8e8" /></svg></body></html>
